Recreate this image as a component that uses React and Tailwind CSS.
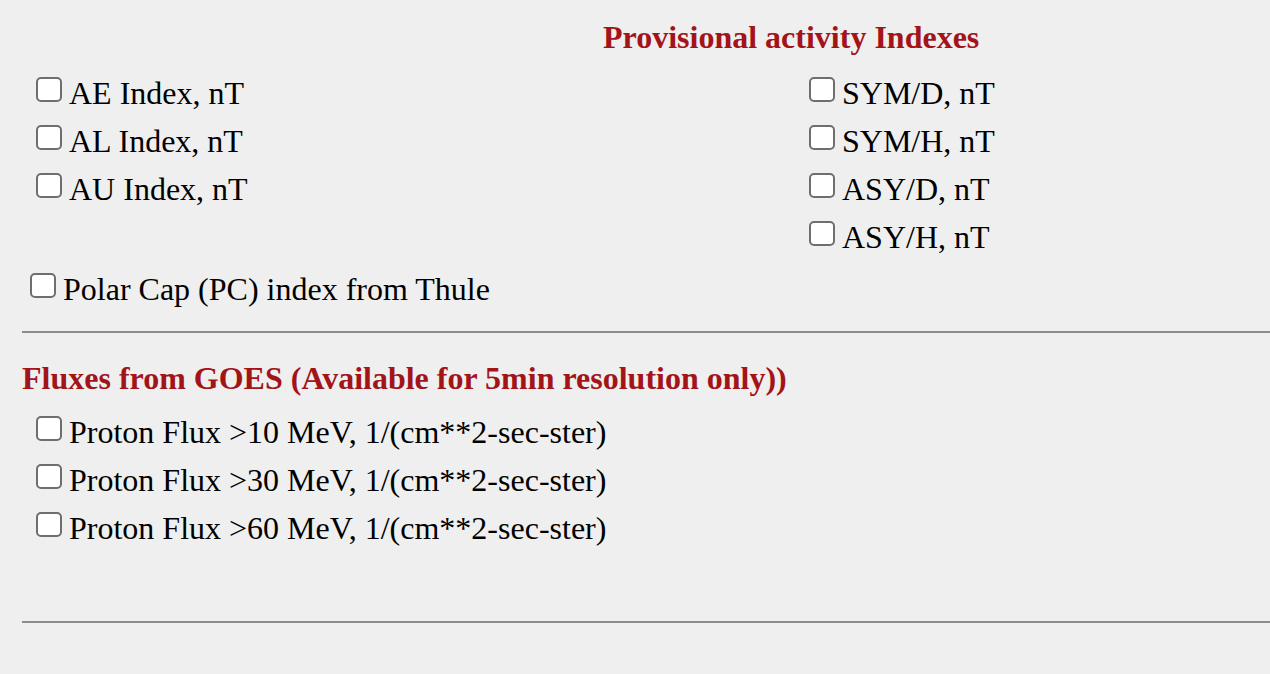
import React from "react";

function Box() {
  return (
    <span className="inline-block w-[26px] h-[25px] shrink-0 border-2 border-[#6e6e6e] rounded-[5px] bg-white mr-[7px] mb-[7px]" />
  );
}

function Row({ label, className = "" }) {
  return (
    <div className={"flex items-center h-[48px] whitespace-nowrap " + className}>
      <Box />
      <span>{label}</span>
    </div>
  );
}

export default function App() {
  return (
    <div
      className="min-h-[674px] bg-[#efefef] text-black text-[32px] leading-[48px] pt-[13px] pl-[22px] overflow-hidden"
      style={{ fontFamily: '"Liberation Serif", "Times New Roman", serif' }}
    >
      <div className="h-[48px] ml-[581px] font-bold text-[#a31419] whitespace-nowrap">
        Provisional activity Indexes
      </div>
      <div className="flex mt-[8px]">
        <div className="w-[773px] pl-[14px]">
          <Row label="AE Index, nT" />
          <Row label="AL Index, nT" />
          <Row label="AU Index, nT" />
        </div>
        <div className="pl-[14px]">
          <Row label="SYM/D, nT" />
          <Row label="SYM/H, nT" />
          <Row label="ASY/D, nT" />
          <Row label="ASY/H, nT" />
        </div>
      </div>
      <div className="mt-[4px] pl-[8px]">
        <Row label="Polar Cap (PC) index from Thule" />
      </div>
      <div className="mt-[18px] h-[2px] bg-[#8c8c8c]" />
      <div className="mt-[21px] h-[48px] font-bold text-[#a31419] whitespace-nowrap">
        Fluxes from GOES (Available for 5min resolution only))
      </div>
      <div className="mt-[6px] pl-[14px]">
        <Row label="Proton Flux >10 MeV, 1/(cm**2-sec-ster)" />
        <Row label="Proton Flux >30 MeV, 1/(cm**2-sec-ster)" />
        <Row label="Proton Flux >60 MeV, 1/(cm**2-sec-ster)" />
      </div>
      <div className="mt-[69px] h-[2px] bg-[#8c8c8c]" />
    </div>
  );
}
